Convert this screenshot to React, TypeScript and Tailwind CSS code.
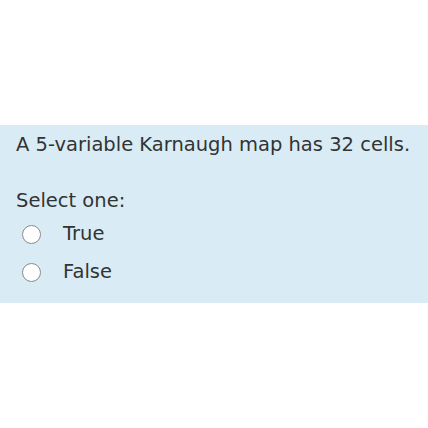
export default function App() {
  const options = ['True', 'False'];
  return (
    <div className="w-[428px] h-[428px] bg-white" style={{ fontFamily: '"DejaVu Sans", Verdana, sans-serif' }}>
      <div className="h-[125px]" />
      <div className="bg-[#d9ecf5] text-[#333333] text-[19.5px] pl-4 pt-[8px] pb-[18px]">
        <p className="leading-[24px]">A 5-variable Karnaugh map has 32 cells.</p>
        <p className="leading-[24px] mt-[32px]">Select one:</p>
        <div className="flex flex-col mt-[8px] gap-[12px]">
          {options.map((o) => (
            <label key={o} className="flex items-center h-[26px]">
              <span className="ml-[6px] w-[19px] h-[19px] rounded-full border border-[#8a8a8a] bg-white" />
              <span className="ml-[22px] leading-[24px]">{o}</span>
            </label>
          ))}
        </div>
      </div>
    </div>
  );
}
